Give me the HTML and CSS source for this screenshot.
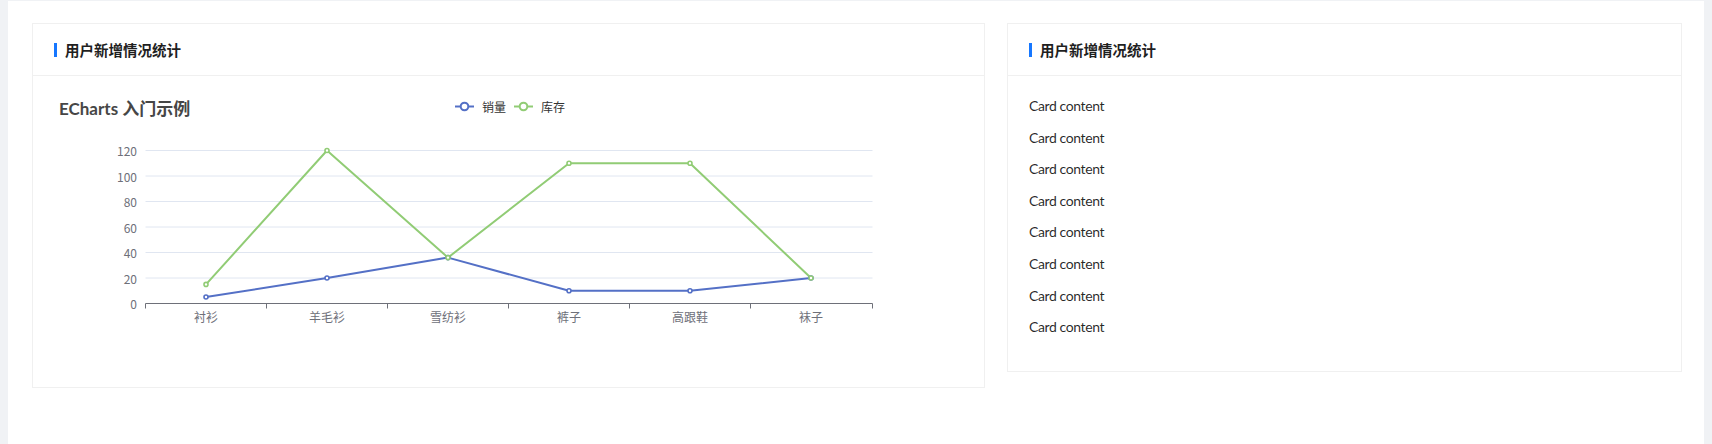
FILE: index.html
```html
<!DOCTYPE html>
<html lang="zh-CN">
<head>
<meta charset="utf-8">
<title>Dashboard</title>
<link rel="stylesheet" href="styles.css">
</head>
<body>
<div class="page">
  <div class="row">
    <section class="card card-chart">
      <header class="card-head"><span class="bar"></span><h2 class="card-title">用户新增情况统计</h2></header>
      <div class="card-body chart-body">
        <svg class="chart" width="908" height="273" viewBox="0 0 908 273" xmlns="http://www.w3.org/2000/svg">
          <text class="c-title" x="5" y="14" dominant-baseline="central">ECharts 入门示例</text>
          <!-- legend -->
          <g class="legend">
            <line x1="401" y1="12.5" x2="420" y2="12.5" stroke="#5470c6" stroke-width="2"/>
            <circle cx="410.5" cy="12.5" r="3.8" fill="#fff" stroke="#5470c6" stroke-width="2"/>
            <text x="428" y="12.5" dominant-baseline="central">销量</text>
            <line x1="460" y1="12.5" x2="479" y2="12.5" stroke="#91cc75" stroke-width="2"/>
            <circle cx="469.5" cy="12.5" r="3.8" fill="#fff" stroke="#91cc75" stroke-width="2"/>
            <text x="487" y="12.5" dominant-baseline="central">库存</text>
          </g>
          <!-- grid lines -->
          <g stroke="#E0E6F1" stroke-width="1">
            <line x1="91.5" y1="56.5" x2="818.5" y2="56.5"/>
            <line x1="91.5" y1="82" x2="818.5" y2="82"/>
            <line x1="91.5" y1="107.5" x2="818.5" y2="107.5"/>
            <line x1="91.5" y1="133" x2="818.5" y2="133"/>
            <line x1="91.5" y1="158.5" x2="818.5" y2="158.5"/>
            <line x1="91.5" y1="184" x2="818.5" y2="184"/>
          </g>
          <!-- y labels -->
          <g class="ylab" text-anchor="end">
            <text x="83" y="56.5" dominant-baseline="central">120</text>
            <text x="83" y="82" dominant-baseline="central">100</text>
            <text x="83" y="107.5" dominant-baseline="central">80</text>
            <text x="83" y="133" dominant-baseline="central">60</text>
            <text x="83" y="158.5" dominant-baseline="central">40</text>
            <text x="83" y="184" dominant-baseline="central">20</text>
            <text x="83" y="209.5" dominant-baseline="central">0</text>
          </g>
          <!-- x axis -->
          <g stroke="#6E7079" stroke-width="1">
            <line x1="91.5" y1="209.5" x2="818.5" y2="209.5"/>
            <line x1="91.5" y1="209.5" x2="91.5" y2="214.5"/>
            <line x1="212.5" y1="209.5" x2="212.5" y2="214.5"/>
            <line x1="333.5" y1="209.5" x2="333.5" y2="214.5"/>
            <line x1="454.5" y1="209.5" x2="454.5" y2="214.5"/>
            <line x1="575.5" y1="209.5" x2="575.5" y2="214.5"/>
            <line x1="696.5" y1="209.5" x2="696.5" y2="214.5"/>
            <line x1="818.5" y1="209.5" x2="818.5" y2="214.5"/>
          </g>
          <g class="xlab" text-anchor="middle">
            <text x="152" y="222" dominant-baseline="central">衬衫</text>
            <text x="273" y="222" dominant-baseline="central">羊毛衫</text>
            <text x="394" y="222" dominant-baseline="central">雪纺衫</text>
            <text x="515" y="222" dominant-baseline="central">裤子</text>
            <text x="636" y="222" dominant-baseline="central">高跟鞋</text>
            <text x="757" y="222" dominant-baseline="central">袜子</text>
          </g>
          <!-- series -->
          <polyline fill="none" stroke="#5470c6" stroke-width="2" stroke-linejoin="bevel" points="152,203 273,184 394,163.6 515,196.8 636,196.8 757,184"/>
          <polyline fill="none" stroke="#91cc75" stroke-width="2" stroke-linejoin="bevel" points="152,190.4 273,56.5 394,163.6 515,69.3 636,69.3 757,184"/>
          <g fill="#fff" stroke="#5470c6" stroke-width="1.6">
            <circle cx="152" cy="203" r="2"/>
            <circle cx="273" cy="184" r="2"/>
            <circle cx="394" cy="163.6" r="2"/>
            <circle cx="515" cy="196.8" r="2"/>
            <circle cx="636" cy="196.8" r="2"/>
            <circle cx="757" cy="184" r="2"/>
          </g>
          <g fill="#fff" stroke="#91cc75" stroke-width="1.6">
            <circle cx="152" cy="190.4" r="2"/>
            <circle cx="273" cy="56.5" r="2"/>
            <circle cx="394" cy="163.6" r="2"/>
            <circle cx="515" cy="69.3" r="2"/>
            <circle cx="636" cy="69.3" r="2"/>
            <circle cx="757" cy="184" r="2"/>
          </g>
        </svg>
      </div>
    </section>
    <section class="card card-list">
      <header class="card-head"><span class="bar"></span><h2 class="card-title">用户新增情况统计</h2></header>
      <div class="card-body list-body">
        <p class="item">Card content</p>
        <p class="item">Card content</p>
        <p class="item">Card content</p>
        <p class="item">Card content</p>
        <p class="item">Card content</p>
        <p class="item">Card content</p>
        <p class="item">Card content</p>
        <p class="item">Card content</p>
      </div>
    </section>
  </div>
</div>
</body>
</html>
```
FILE: styles.css
```css
html, body {
  margin: 0;
  padding: 0;
}
body {
  background: #f0f2f5;
  font-family: "Noto Sans", "Noto Sans CJK SC", sans-serif;
  color: rgba(0, 0, 0, 0.85);
  padding: 1px 8px 0 8px;
}
.page {
  background: #fff;
  min-height: 443px;
  padding: 22px 0 0 24px;
  box-sizing: border-box;
}
.row {
  display: grid;
  grid-template-columns: 953px 675px;
  column-gap: 22px;
  align-items: start;
}
.card {
  background: #fff;
  border: 1px solid #f0f0f0;
  box-sizing: border-box;
}
.card-head {
  height: 51px;
  border-bottom: 1px solid #f0f0f0;
  display: flex;
  align-items: center;
  padding-left: 21px;
}
.bar {
  width: 3px;
  height: 14px;
  background: #1677ff;
  margin-right: 8px;
}
.card-title {
  margin: 0;
  font-family: "Noto Sans CJK SC", sans-serif;
  font-size: 14.5px;
  font-weight: 600;
  color: #1f1f1f;
  line-height: 22px;
}
.chart-body {
  padding: 18px 21px 20px 21px;
}
.chart {
  display: block;
  font-family: "Noto Sans CJK SC", sans-serif;
}
.c-title {
  font-family: "Lato", "Noto Sans CJK SC", sans-serif;
  font-size: 17px;
  font-weight: 700;
  fill: #464646;
}
.legend text {
  font-size: 12px;
  fill: #333;
}
.ylab text, .xlab text {
  font-size: 12px;
  fill: #6E7079;
}
.list-body {
  padding: 19px 21px 23px 21px;
}
.item {
  margin: 0 0 9.6px 0;
  font-family: "Lato", "Noto Sans CJK SC", sans-serif;
  font-size: 14px;
  letter-spacing: -0.4px;
  line-height: 22px;
  color: rgba(0, 0, 0, 0.85);
}
```
